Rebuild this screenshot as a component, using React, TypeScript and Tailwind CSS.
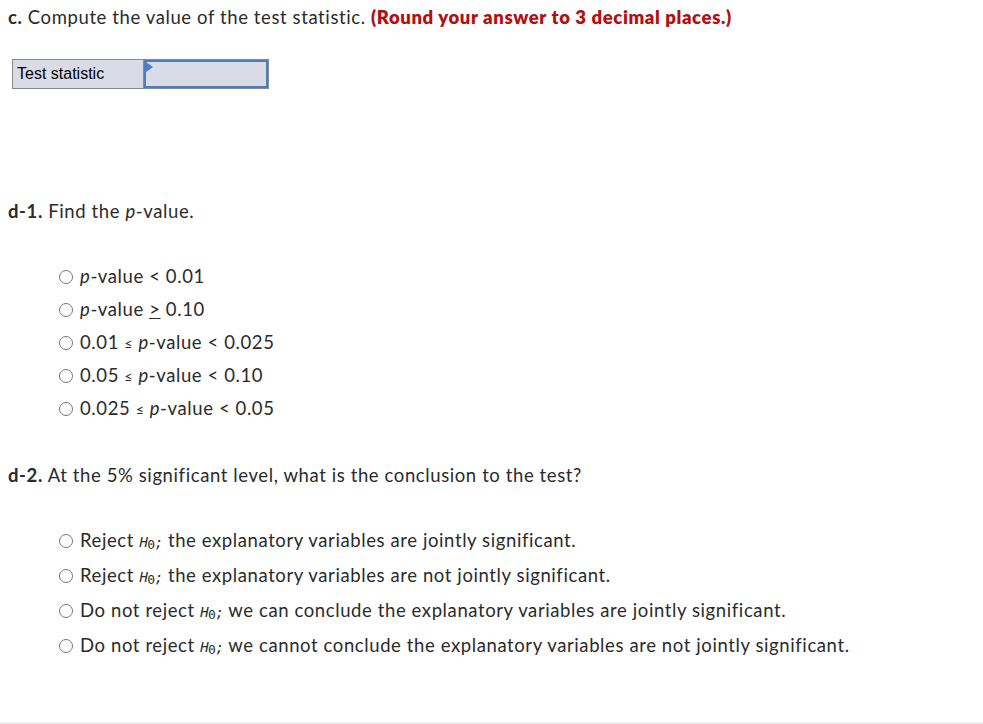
import React from "react";

const font = { fontFamily: "Lato, 'Open Sans', sans-serif" };

const Radio = () => (
    <span className="inline-block w-[14px] h-[14px] rounded-full border border-[#767676] bg-white shrink-0" />
);

const P = () => <i className="font-normal">p</i>;

const H0 = () => (
    <span className="italic text-[14px] font-['DejaVu_Sans_Mono',monospace] tracking-[-0.5px]">
        H<span className="not-italic text-[13px] relative top-[2px]">0</span>;
    </span>
);

const pOptions: React.ReactNode[] = [
    <><P />-value &lt; 0.01</>,
    <><P />-value <span className="underline underline-offset-2">&gt;</span> 0.10</>,
    <>0.01 <span className="text-[14px]">≤</span> <P />-value &lt; 0.025</>,
    <>0.05 <span className="text-[14px]">≤</span> <P />-value &lt; 0.10</>,
    <>0.025 <span className="text-[14px]">≤</span> <P />-value &lt; 0.05</>
];

const conclusions: React.ReactNode[] = [
    <>Reject <H0 /> the explanatory variables are jointly significant.</>,
    <>Reject <H0 /> the explanatory variables are not jointly significant.</>,
    <>Do not reject <H0 /> we can conclude the explanatory variables are jointly significant.</>,
    <>Do not reject <H0 /> we cannot conclude the explanatory variables are not jointly significant.</>
];

export default function App() {
    return (
        <div className="relative w-[983px] h-[724px] bg-white text-[#2b2b2b] overflow-hidden tracking-[0.6px]" style={font}>
            <div className="pl-2 pt-[5px] text-[18.5px] leading-[24px]">
                <span className="font-bold">c.</span> Compute the value of the test statistic.{" "}
                <span className="font-extrabold text-[#b01010]">(Round your answer to 3 decimal places.)</span>
            </div>

            <div className="ml-3 mt-[30px] flex w-[257px] h-[30px] border border-[#8a8a8a] bg-[#d9dce6] tracking-normal">
                <div className="w-[131px] border-r border-[#8a8a8a] pl-1 flex items-center text-[16px] text-black font-['Liberation_Sans',Arial,sans-serif]">
                    Test statistic
                </div>
                <div className="relative flex-1 border-2 border-[#4d7fc0] bg-[#d9dce6]">
                    <span className="absolute left-0 top-0 w-0 h-0 border-t-[5px] border-b-[5px] border-l-[7px] border-t-transparent border-b-transparent border-l-[#4d7fc0]" />
                </div>
            </div>

            <div className="pl-2 mt-[110px] text-[18.5px] leading-[24px]">
                <span className="font-bold">d-1.</span> Find the <P />-value.
            </div>

            <div className="mt-[42px] pl-[59px] flex flex-col gap-[9px]">
                {pOptions.map((opt, i) => (
                    <div key={i} className="flex items-center gap-[7px] h-[24px] text-[18.5px]">
                        <Radio />
                        <span>{opt}</span>
                    </div>
                ))}
            </div>

            <div className="pl-2 mt-[42px] text-[18.5px] leading-[24px]">
                <span className="font-bold">d-2.</span> At the 5% significant level, what is the conclusion to the test?
            </div>

            <div className="mt-[42px] pl-[59px] flex flex-col gap-[11px]">
                {conclusions.map((opt, i) => (
                    <div key={i} className="flex items-center gap-[7px] h-[24px] text-[18.5px]">
                        <Radio />
                        <span>{opt}</span>
                    </div>
                ))}
            </div>

            <div className="absolute left-0 right-0 bottom-0 h-[2px] bg-[#eeeeee]" />
        </div>
    );
}
